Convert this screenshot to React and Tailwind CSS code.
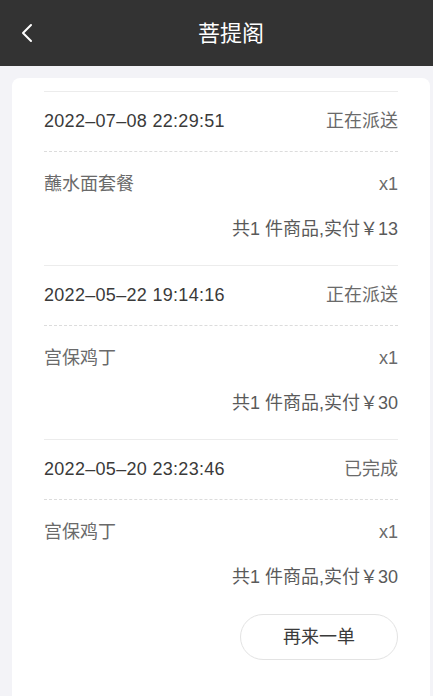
import React from "react"

const orders = [
  { time: "2022–07–08 22:29:51", status: "正在派送", name: "蘸水面套餐", count: 1, total: 13 },
  { time: "2022–05–22 19:14:16", status: "正在派送", name: "宫保鸡丁", count: 1, total: 30 },
  { time: "2022–05–20 23:23:46", status: "已完成", name: "宫保鸡丁", count: 1, total: 30, again: true },
]

const font = { fontFamily: '"Liberation Sans", "Noto Sans CJK SC", sans-serif' }

const BackIcon = () => (
  <svg width="12" height="20" viewBox="0 0 12 20" fill="none">
    <polyline points="10,2 2,10 10,18" stroke="#fff" strokeWidth="2" strokeLinecap="round" strokeLinejoin="round" />
  </svg>
)

const OrderBlock = ({ order }) => (
  <div className="border-t border-[#ececec]">
    {/* time + status */}
    <div className="flex h-[59px] items-center justify-between text-[18px]">
      <span className="tracking-[0.3px] text-[#3a3a3a]">{order.time}</span>
      <span className="text-[#6a6a6a]">{order.status}</span>
    </div>
    <div className="border-t border-dashed border-[#dcdcdc]" />
    {/* item row */}
    <div className="flex h-[26px] mt-[19px] items-center justify-between text-[18px] text-[#6a6a6a]">
      <span>{order.name}</span>
      <span>x{order.count}</span>
    </div>
    {/* summary */}
    <div className="flex h-[26px] mt-[19px] items-center justify-end text-[18px] text-[#5a5a5a]">
      共{order.count} 件商品,实付￥{order.total}
    </div>
    {order.again ? (
      <div className="flex justify-end pt-[24px] pb-[60px]">
        <button className="h-[46px] w-[158px] rounded-full border border-[#e3e3e3] text-[18px] text-[#3a3a3a]">
          再来一单
        </button>
      </div>
    ) : (
      <div className="h-[23px]" />
    )}
  </div>
)

export default function App() {
  return (
    <div className="min-h-[696px] bg-[#f3f3f7]" style={font}>
      <header className="flex h-[66px] items-center bg-[#333333]">
        <div className="flex w-[54px] items-center pl-[21px]">
          <BackIcon />
        </div>
        <h1 className="flex-1 text-center text-[22px] text-white">菩提阁</h1>
        <div className="w-[25px]" />
      </header>

      <div className="ml-[12px] mt-[12px] w-[418px] rounded-[8px] bg-white px-[32px] pt-[13px]">
        {orders.map((o, i) => (
          <OrderBlock key={i} order={o} />
        ))}
      </div>
    </div>
  )
}
